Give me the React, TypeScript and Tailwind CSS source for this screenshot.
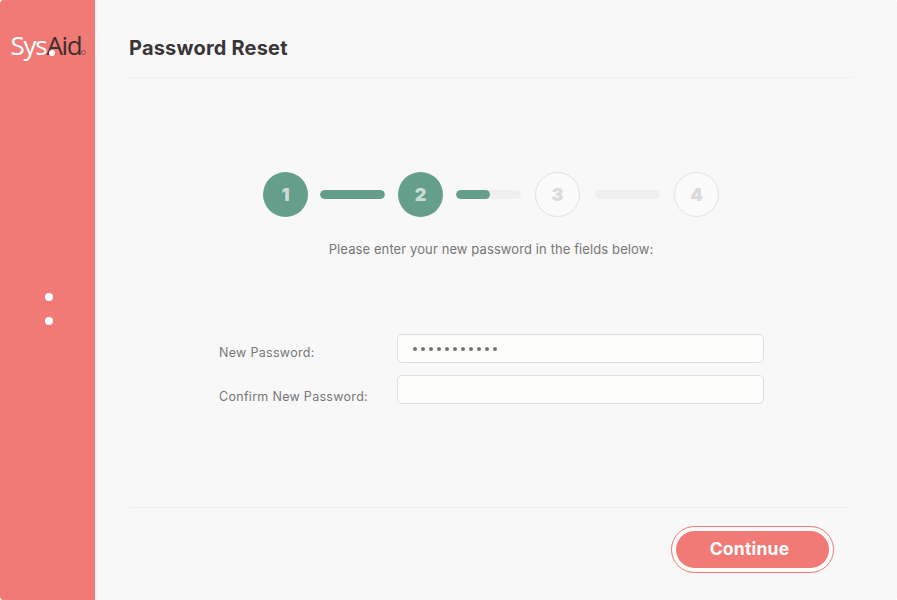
import React from 'react';

const font = "font-['Inter','Liberation_Sans',sans-serif]";

const Step = ({ n, done }: { n: number; done: boolean }) => (
  <div
    className={
      done
        ? 'w-[45px] h-[45px] shrink-0 rounded-full bg-[#659f8b] flex items-center justify-center text-[18px] font-black text-[#c9dcd5]'
        : 'w-[45px] h-[45px] shrink-0 rounded-full bg-[#fbfbfb] border border-[#e2e2e2] flex items-center justify-center text-[18px] font-black text-[#dadada]'
    }
  >
    {n}
  </div>
);

const Bar = ({ pct, className }: { pct: number; className: string }) => (
  <div className={`w-[65px] h-[9px] shrink-0 rounded-full bg-[#efefef] overflow-hidden ${className}`}>
    <div className="h-full rounded-full bg-[#659f8b]" style={{ width: `${pct}%` }} />
  </div>
);

export default function App() {
  return (
    <div className={`${font} w-[897px] h-[600px] flex bg-[#f8f8f8] rounded-[4px] overflow-hidden`}>
      {/* sidebar */}
      <div className="w-[95px] shrink-0 bg-[#f17a76] flex flex-col items-center">
        <div className="relative mt-[29px] ml-[-3px] flex items-baseline text-[26px] leading-[33px] tracking-[-1.3px] font-medium font-['Open_Sans',sans-serif]">
          <span className="text-white">Sys</span>
          <span className="text-[#3b2f30]">Aid</span>
          <span className="absolute left-[38px] top-[21px] w-[6px] h-[6px] rounded-full bg-white" />
          <span className="absolute right-[-5px] bottom-[7px] w-[5px] h-[5px] rounded-full border border-[#8a4a48]" />
        </div>
        <div className="mt-[231px] ml-[2px] flex flex-col gap-[16px]">
          <div className="w-[8px] h-[8px] rounded-full bg-white" />
          <div className="w-[8px] h-[8px] rounded-full bg-white" />
        </div>
      </div>

      {/* main */}
      <div className="flex-1 flex flex-col pl-[34px] pr-[44px]">
        <div className="h-[78px] border-b border-[#efefef] pt-[36px]">
          <h1 className="text-[20px] leading-[24px] font-bold text-[#3a3536] tracking-[0.2px]">Password Reset</h1>
        </div>

        <div className="mt-[94px] flex items-center ml-[134px]">
          <Step n={1} done />
          <Bar pct={100} className="ml-[12px] mr-[13px]" />
          <Step n={2} done />
          <Bar pct={52} className="ml-[13px] mr-[14px]" />
          <Step n={3} done={false} />
          <Bar pct={0} className="ml-[15px] mr-[14px]" />
          <Step n={4} done={false} />
        </div>

        <p className="mt-[23px] h-[18px] text-center text-[13px] leading-[18px] text-[#777777] tracking-[0.1px]">
          Please enter your new password in the fields below:
        </p>

        <div className="mt-[76px] ml-[90px] flex flex-col gap-[12px]">
          <div className="flex items-start">
            <label className="w-[178px] pt-[10px] text-[12.5px] leading-[18px] text-[#777777] tracking-[0.3px]">New Password:</label>
            <div className="w-[367px] h-[29px] rounded-[5px] border border-[#dedede] bg-[#fdfdfc] pl-[15px] flex items-center gap-[4px]">
              {Array.from({ length: 11 }).map((_, i) => (
                <span key={i} className="w-[4px] h-[4px] rounded-full bg-[#7a7173]" />
              ))}
            </div>
          </div>
          <div className="flex items-start">
            <label className="w-[178px] pt-[13px] text-[12.5px] leading-[18px] text-[#777777] tracking-[0.3px]">Confirm New Password:</label>
            <div className="w-[367px] h-[29px] rounded-[5px] border border-[#dedede] bg-[#fdfdfc]" />
          </div>
        </div>

        <div className="mt-[101px] mr-[5px] border-t border-[#efefef] flex justify-end pr-[14px] pt-[18px]">
          <button className="w-[163px] h-[47px] rounded-full border border-[#f17a76] p-[4px] bg-[#fbfbfb]">
            <span className="w-full h-full rounded-full bg-[#f17a76] flex items-center justify-center pr-[6px] text-white text-[17.5px] font-bold tracking-[0.2px]">
              Continue
            </span>
          </button>
        </div>
      </div>
    </div>
  );
}
